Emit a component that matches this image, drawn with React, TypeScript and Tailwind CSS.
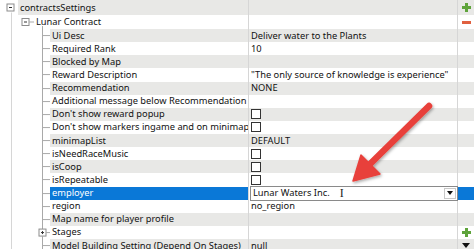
import React from 'react'

type Row = {
  label: string
  depth: 0 | 1 | 2
  expander?: 'minus' | 'plus'
  value?: string
  check?: boolean
  combo?: string
  selected?: boolean
  right?: 'plus' | 'minus' | 'down'
  h: string
}

const rows: Row[] = [
  { label: 'contractsSettings', depth: 0, expander: 'minus', right: 'plus', h: 'h-[15px]' },
  { label: 'Lunar Contract', depth: 1, expander: 'minus', right: 'minus', h: 'h-[14px]' },
  { label: 'Ui Desc', depth: 2, value: 'Deliver water to the Plants', h: 'h-[13.125px]' },
  { label: 'Required Rank', depth: 2, value: '10', h: 'h-[13.125px]' },
  { label: 'Blocked by Map', depth: 2, h: 'h-[13.125px]' },
  { label: 'Reward Description', depth: 2, value: '"The only source of knowledge is experience"', h: 'h-[13.125px]' },
  { label: 'Recommendation', depth: 2, value: 'NONE', h: 'h-[13.125px]' },
  { label: 'Additional message below Recommendation', depth: 2, h: 'h-[13.125px]' },
  { label: "Don't show reward popup", depth: 2, check: true, h: 'h-[13.125px]' },
  { label: "Don't show markers ingame and on minimap", depth: 2, check: true, h: 'h-[13.125px]' },
  { label: 'minimapList', depth: 2, value: 'DEFAULT', h: 'h-[13.125px]' },
  { label: 'isNeedRaceMusic', depth: 2, check: true, h: 'h-[13.125px]' },
  { label: 'isCoop', depth: 2, check: true, h: 'h-[13.125px]' },
  { label: 'isRepeatable', depth: 2, check: true, h: 'h-[13.125px]' },
  { label: 'employer', depth: 2, combo: 'Lunar Waters Inc.', selected: true, h: 'h-[13.125px]' },
  { label: 'region', depth: 2, value: 'no_region', h: 'h-[13.125px]' },
  { label: 'Map name for player profile', depth: 2, h: 'h-[13.125px]' },
  { label: 'Stages', depth: 2, expander: 'plus', right: 'plus', h: 'h-[13.125px]' },
  { label: 'Model Building Setting (Depend On Stages)', depth: 2, value: 'null', right: 'down', h: 'h-[13.125px]' },
]

// tree connector drawing for the indent area
function TreeGlyph({ row, index }: { row: Row; index: number }) {
  const w = row.depth === 0 ? 18 : row.depth === 1 ? 34 : 50
  const line = '#a9a9a9'
  const box = (cx: number) => (
    <g>
      <rect x={cx - 3.5} y={4} width={7} height={7} fill="#fff" stroke="#8c8c8c" strokeWidth={1} />
      <line x1={cx - 1.5} y1={7.5} x2={cx + 1.5} y2={7.5} stroke="#333" strokeWidth={1} />
      {row.expander === 'plus' && <line x1={cx} y1={6} x2={cx} y2={9} stroke="#333" strokeWidth={1} />}
    </g>
  )
  return (
    <svg width={w} height="100%" viewBox={`0 0 ${w} 15`} preserveAspectRatio="xMinYMid slice" className="shrink-0 overflow-visible">
      {index > 0 && <line x1={11.5} y1={-2} x2={11.5} y2={17} stroke="#d6d6d6" strokeWidth={1} />}
      {row.depth === 0 && box(10.5)}
      {row.depth === 1 && (
        <>
          {box(25.5)}
          <line x1={29} y1={7.5} x2={34} y2={7.5} stroke={line} strokeWidth={1} />
        </>
      )}
      {row.depth === 2 && (
        <>
          <line x1={42.5} y1={-2} x2={42.5} y2={17} stroke={line} strokeWidth={1} />
          {row.expander ? (
            <>
              {box(42.5)}
              <line x1={46} y1={7.5} x2={50} y2={7.5} stroke={line} strokeWidth={1} />
            </>
          ) : (
            <line x1={42.5} y1={7.5} x2={50} y2={7.5} stroke={line} strokeWidth={1} />
          )}
        </>
      )}
    </svg>
  )
}

function RightIcon({ kind }: { kind?: Row['right'] }) {
  if (kind === 'plus')
    return (
      <svg width="9" height="9" viewBox="0 0 9 9">
        <rect x="3" y="0" width="3" height="9" fill="#5ea33a" />
        <rect x="0" y="3" width="9" height="3" fill="#5ea33a" />
      </svg>
    )
  if (kind === 'minus')
    return (
      <svg width="9" height="9" viewBox="0 0 9 9">
        <rect x="0" y="3" width="9" height="3" fill="#e0603f" />
      </svg>
    )
  if (kind === 'down')
    return (
      <svg width="8" height="5" viewBox="0 0 8 5">
        <path d="M0 0 H8 L4 5 Z" fill="#111" />
      </svg>
    )
  return null
}

function Checkbox() {
  return <div className="w-[10px] h-[10px] border border-[#333] bg-white" />
}

function Combo({ text }: { text: string }) {
  return (
    <div className="relative -mx-[1px] h-[15px] flex-1 flex items-center border border-[#8a8a8a] bg-white text-[#111]">
      <span className="pl-[2px]">{text}</span>
      <span className="ml-[10px] font-['Liberation_Serif',serif] text-[12px] leading-none text-[#222]">I</span>
      <div className="ml-auto mr-[1px] w-[12px] h-[11px] border border-[#c8c8c8] flex items-center justify-center">
        <svg width="6" height="4" viewBox="0 0 6 4">
          <path d="M0 0 H6 L3 4 Z" fill="#111" />
        </svg>
      </div>
    </div>
  )
}

function Arrow() {
  return (
    <svg className="absolute inset-0 pointer-events-none" width="474" height="249" viewBox="0 0 474 249">
      <defs>
        <filter id="sh" x="-20%" y="-20%" width="140%" height="140%">
          <feDropShadow dx="1" dy="1.5" stdDeviation="1.5" floodColor="#000" floodOpacity="0.35" />
        </filter>
      </defs>
      <g filter="url(#sh)">
        <line x1="429" y1="106" x2="368" y2="166" stroke="#e8403b" strokeWidth="6.5" strokeLinecap="round" />
        <path d="M353 181 L380 174 L361 155 Z" fill="#e8403b" stroke="#e8403b" strokeWidth="1.5" strokeLinejoin="round" />
      </g>
    </svg>
  )
}

export default function App() {
  return (
    <div className="relative w-[474px] h-[249px] overflow-hidden bg-white font-['Noto_Sans',sans-serif] text-[9.3px] text-[#111]">
      <div className="flex flex-col">
        {rows.map((row, i) => {
          const stripe = i % 2 === 0 ? 'bg-[#e8e8e6]' : 'bg-white'
          const bg = row.selected ? 'bg-[#0a78d7]' : stripe
          return (
            <div key={i} className={`flex ${row.h} shrink-0`}>
              <TreeGlyph row={row} index={i} />
              <div
                className={`flex-1 min-w-0 flex items-center pl-[2px] whitespace-nowrap overflow-hidden border-r border-[#d6d6d6] ${bg} ${
                  row.selected ? 'text-white' : ''
                }`}
              >
                {row.label}
              </div>
              <div className={`w-[208px] shrink-0 flex items-center pl-[2px] whitespace-nowrap overflow-visible ${row.combo ? 'bg-white' : stripe}`}>
                {row.value}
                {row.check && <Checkbox />}
                {row.combo && <Combo text={row.combo} />}
              </div>
              <div className={`w-[17px] shrink-0 flex items-center justify-center border-l border-[#d6d6d6] ${bg}`}>
                <RightIcon kind={row.right} />
              </div>
            </div>
          )
        })}
      </div>
      <Arrow />
    </div>
  )
}
